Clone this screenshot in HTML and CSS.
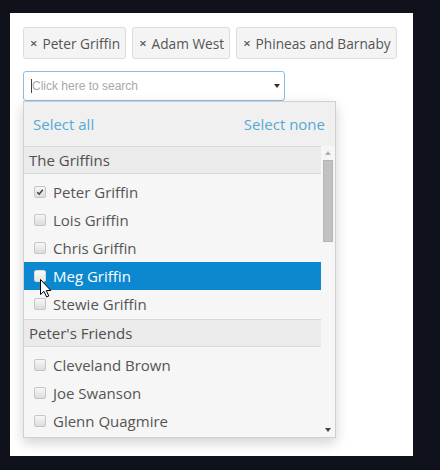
FILE: index.html
```html
<!DOCTYPE html>
<html>
<head>
<meta charset="utf-8">
<link rel="stylesheet" href="styles.css">
</head>
<body>
<div class="panel">
  <div class="tags">
    <span class="tag"><span class="x">×</span>Peter Griffin</span>
    <span class="tag"><span class="x">×</span>Adam West</span>
    <span class="tag"><span class="x">×</span>Phineas and Barnaby</span>
  </div>
  <div class="search">
    <span class="caret-line"></span>
    <span class="placeholder">Click here to search</span>
    <span class="arrow"></span>
  </div>
  <div class="dropdown">
    <div class="dd-head">
      <a class="link">Select all</a>
      <a class="link">Select none</a>
    </div>
    <div class="dd-body">
      <div class="list">
        <div class="group">The Griffins</div>
        <ul class="items">
          <li class="item"><span class="cb checked"><svg viewBox="0 0 10 10" width="8" height="8"><path d="M1.5 5.2 L4 7.6 L8.6 2.2" fill="none" stroke="#444" stroke-width="1.8"/></svg></span>Peter Griffin</li>
          <li class="item"><span class="cb"></span>Lois Griffin</li>
          <li class="item"><span class="cb"></span>Chris Griffin</li>
          <li class="item active"><span class="cb"></span>Meg Griffin
            <svg class="cursor" viewBox="0 0 12 19" width="12" height="19"><path d="M0.5 0.5 L0.5 15.5 L4 12.3 L6.6 18 L8.8 17 L6.3 11.5 L10.8 11.5 Z" fill="#fff" stroke="#000" stroke-width="1"/></svg>
          </li>
          <li class="item"><span class="cb"></span>Stewie Griffin</li>
        </ul>
        <div class="group">Peter's Friends</div>
        <ul class="items">
          <li class="item"><span class="cb"></span>Cleveland Brown</li>
          <li class="item"><span class="cb"></span>Joe Swanson</li>
          <li class="item"><span class="cb"></span>Glenn Quagmire</li>
        </ul>
      </div>
      <div class="scrollbar">
        <div class="sb-btn"><span class="tri-up"></span></div>
        <div class="thumb"></div>
        <div class="sb-space"></div>
        <div class="sb-btn"><span class="tri-down"></span></div>
      </div>
    </div>
  </div>
</div>
</body>
</html>
```

FILE: styles.css
```css
html, body {
  margin: 0;
  padding: 0;
  height: 100%;
}
body {
  background: #0f121a;
  font-family: "Open Sans", "DejaVu Sans", sans-serif;
  overflow: hidden;
}
.panel {
  width: 403px;
  height: 443px;
  margin: 13px 0 0 10px;
  background: #fff;
  box-sizing: border-box;
  padding: 14px 0 0 13px;
}
.tags {
  display: flex;
  gap: 6px;
  height: 32px;
}
.tag {
  display: flex;
  align-items: center;
  box-sizing: border-box;
  height: 32px;
  padding: 0 5px 0 6px;
  border: 1px solid #dcdcdc;
  border-radius: 3px;
  background: #f4f4f4;
  color: #555;
  font-size: 13.7px;
  white-space: nowrap;
}
.tag .x {
  font-size: 13px;
  font-weight: 600;
  margin-right: 5px;
  color: #555;
}
.search {
  margin-top: 12px;
  width: 262px;
  height: 30px;
  box-sizing: border-box;
  border: 1px solid #86bde6;
  border-radius: 3px;
  display: flex;
  align-items: center;
  padding: 0 4px 0 7px;
  background: #fff;
}
.caret-line {
  width: 1px;
  height: 14px;
  background: #444;
}
.placeholder {
  font-family: "Liberation Sans", Arial, sans-serif;
  font-size: 12px;
  color: #a8a8a8;
}
.arrow {
  margin-left: auto;
  width: 0;
  height: 0;
  border-left: 3.5px solid transparent;
  border-right: 3.5px solid transparent;
  border-top: 4px solid #333;
}
.dropdown {
  width: 313px;
  height: 337px;
  box-sizing: border-box;
  border: 1px solid #d0d0d0;
  background: #f6f6f6;
  box-shadow: 0 5px 12px rgba(0,0,0,0.18);
  display: flex;
  flex-direction: column;
}
.dd-head {
  height: 44px;
  flex: none;
  display: flex;
  align-items: center;
  justify-content: space-between;
  padding: 0 10px 0 9px;
  background: #f0f0f0;
}
.link {
  color: #57a9d5;
  font-size: 15px;
  cursor: pointer;
}
.dd-body {
  flex: 1;
  display: flex;
  min-height: 0;
}
.list {
  flex: 1;
  overflow: hidden;
}
.group {
  height: 26px;
  border-top: 1px solid #d9d9d9;
  border-bottom: 1px solid #d9d9d9;
  background: #ebebeb;
  color: #4f4f4f;
  font-size: 15px;
  line-height: 26px;
  padding-left: 5px;
}
.items {
  list-style: none;
  margin: 0;
  padding: 4px 0 1px;
}
.item {
  position: relative;
  height: 28px;
  display: flex;
  align-items: center;
  padding-left: 10px;
  color: #555;
  font-size: 15px;
}
.cb {
  width: 12px;
  height: 12px;
  box-sizing: border-box;
  border: 1px solid #c6c6c6;
  border-radius: 2px;
  background: linear-gradient(#f7f7f7, #dcdcdc);
  margin-right: 7px;
  display: flex;
  align-items: center;
  justify-content: center;
}
.item.active {
  background: #0b88cf;
  color: #fff;
}
.item.active .cb {
  border-color: #d8d8d8;
  background: linear-gradient(#fafafa, #e6e6e6);
}
.cursor {
  position: absolute;
  left: 16px;
  top: 17px;
}
.scrollbar {
  width: 14px;
  flex: none;
  display: flex;
  flex-direction: column;
  background: #f6f6f6;
}
.sb-btn {
  height: 14px;
  display: flex;
  align-items: center;
  justify-content: center;
}
.tri-up {
  width: 0;
  height: 0;
  border-left: 3.5px solid transparent;
  border-right: 3.5px solid transparent;
  border-bottom: 4px solid #b0b0b0;
}
.tri-down {
  width: 0;
  height: 0;
  border-left: 3.5px solid transparent;
  border-right: 3.5px solid transparent;
  border-top: 4px solid #444;
}
.thumb {
  width: 10px;
  height: 82px;
  margin-left: 2px;
  background: #c1c1c1;
  border: 1px solid #b5b5b5;
  box-sizing: border-box;
}
.sb-space {
  flex: 1;
}
```
